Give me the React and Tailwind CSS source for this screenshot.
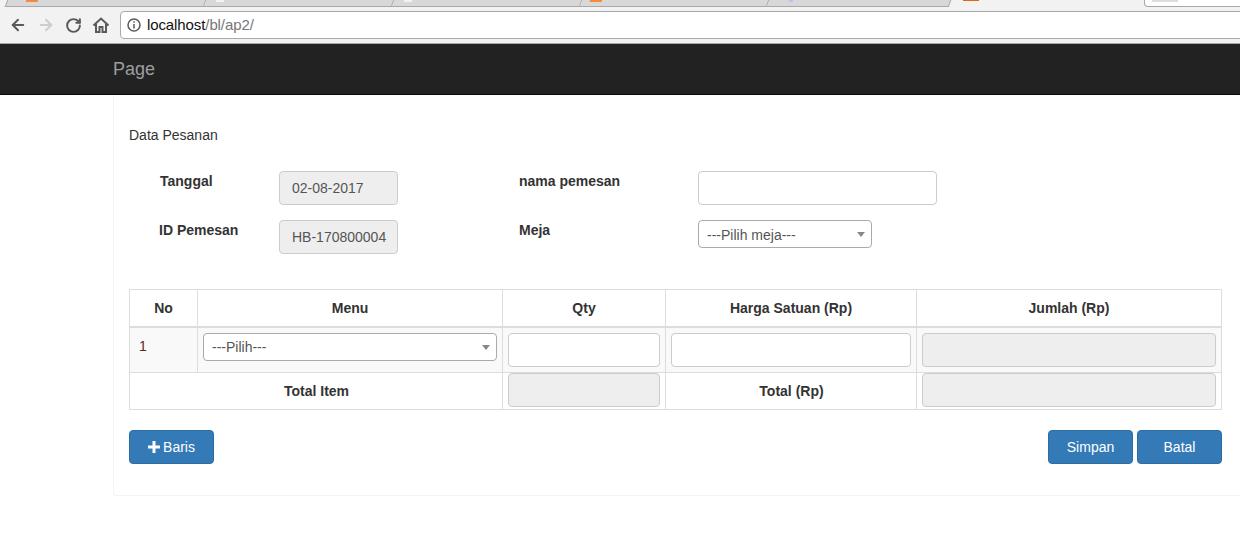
import { ArrowLeft, ArrowRight, RotateCw } from "lucide-react";

function Field({ value, className = "" }) {
  return (
    <div className={`h-[34px] rounded border border-[#ccc] bg-[#eee] px-3 text-sm leading-[32px] whitespace-nowrap text-[#555] ${className}`}>
      {value}
    </div>
  );
}

function Blank({ className = "" }) {
  return <div className={`h-[34px] rounded border border-[#ccc] bg-white ${className}`}></div>;
}

function Pick({ label, className = "" }) {
  return (
    <div className={`flex h-[28px] items-center justify-between rounded border border-[#aaa] bg-white pr-[6px] pl-2 text-sm text-[#555] ${className}`}>
      <span className="pt-px">{label}</span>
      <span className="mt-px h-0 w-0 border-x-4 border-t-5 border-x-transparent border-t-[#888]"></span>
    </div>
  );
}

function Tab({ className = "", icon = "", iconAt = "ml-[18px]" }) {
  return (
    <div className={`h-[7px] -skew-x-[20deg] border-r border-b border-[#a8a8a8] bg-[#d8d8d8] ${className}`}>
      {icon && <div className={`h-[2px] ${iconAt} ${icon}`}></div>}
    </div>
  );
}

function Row({ label, children, label2, children2 }) {
  return (
    <div className="flex items-start">
      <div className="w-[120px] leading-5 font-bold">{label}</div>
      <div className="w-[119px]">{children}</div>
      <div className="ml-[121px] w-[179px] leading-5 font-bold">{label2}</div>
      {children2}
    </div>
  );
}

export default function App() {
  return (
    <div className="h-[534px] w-[1240px] overflow-hidden bg-white font-['Liberation_Sans',Arial,sans-serif] text-sm text-[#333]">
      <div className="flex h-[7px] bg-[#f2f2f2] pl-[6px]">
        <Tab className="w-[199px] border-l" icon="w-3 bg-[#f58a3a]" />
        <Tab className="w-[188px]" icon="w-2 bg-[#f4f4f4]" iconAt="ml-[10px]" />
        <Tab className="w-[188px]" icon="w-2 bg-[#f4f4f4]" iconAt="ml-[10px]" />
        <Tab className="w-[187px]" icon="w-3 bg-[#f58a3a]" iconAt="ml-[8px]" />
        <Tab className="w-[182px]" icon="w-1 bg-[#b9c4e8]" iconAt="ml-[20px]" />
        <div className="w-[194px] pl-[13px]">
          <div className="h-px w-4 bg-[#e0661c]"></div>
        </div>
        <div className="flex-1 rounded-bl border-b border-l border-[#a8a8a8] bg-white pl-[7px]">
          <div className="h-[2px] w-[26px] bg-[#ddd]"></div>
        </div>
      </div>

      <div className="flex h-[36px] items-center bg-[#f2f2f2] pl-[9px]">
        <ArrowLeft size={18} strokeWidth={2.6} className="text-[#5a5a5a]" />
        <ArrowRight size={18} strokeWidth={2.6} className="ml-[10px] text-[#cdcdcd]" />
        <RotateCw size={17} strokeWidth={2.8} className="ml-[10px] text-[#5a5a5a]" />
        <svg viewBox="0 0 18 18" className="ml-[10px] h-[18px] w-[18px]" fill="none" stroke="#5a5a5a" strokeWidth="2">
          <path d="M1.5 9.5 9 2.5l7.5 7M4 8v8h3.5v-5h3v5H14V8" />
        </svg>
        <div className="-mr-1 ml-[10px] flex h-[28px] flex-1 items-center rounded-sm border border-[#a9a9a9] bg-white pl-[6px] text-[15px] tracking-[-0.1px]">
          <svg viewBox="0 0 14 14" className="h-[14px] w-[14px]" fill="none" stroke="#5a5a5a" strokeWidth="1.5">
            <circle cx="7" cy="7" r="6" />
            <path d="M7 6v4.5M7 3.2v1.6" />
          </svg>
          <span className="ml-[6px] text-[#111]">localhost</span>
          <span className="text-[#777]">/bl/ap2/</span>
        </div>
      </div>

      <div className="flex h-[52px] items-center border-t border-b border-t-[#a8a8a8] border-b-[#080808] bg-[#222] pl-[113px] text-lg text-[#9d9d9d]">
        Page
      </div>

      <div className="ml-[113px] h-[401px] rounded-bl border-b border-l border-[#f3f3f3] pt-[30px] pr-[18px] pl-[15px]">
        <p className="leading-5">Data Pesanan</p>

        <div className="mt-[26px] flex flex-col gap-[15px] pl-[30px]">
          <Row label={<span className="ml-px">Tanggal</span>} label2="nama pemesan" children2={<Blank className="w-[239px]" />}>
            <Field value="02-08-2017" />
          </Row>
          <Row label="ID Pemesan" label2="Meja" children2={<Pick label="---Pilih meja---" className="w-[174px]" />}>
            <Field value="HB-170800004" />
          </Row>
        </div>

        <table className="mt-[35px] w-[1093px] table-fixed border-collapse border border-[#ddd]">
          <thead>
            <tr className="h-[37px] border-b-2 border-[#ddd]">
              <th className="w-[68px] border border-[#ddd] font-bold">No</th>
              <th className="w-[305px] border border-[#ddd] font-bold">Menu</th>
              <th className="w-[163px] border border-[#ddd] font-bold">Qty</th>
              <th className="w-[251px] border border-[#ddd] font-bold">Harga Satuan (Rp)</th>
              <th className="border border-[#ddd] font-bold">Jumlah (Rp)</th>
            </tr>
          </thead>
          <tbody>
            <tr className="h-[46px] bg-[#f9f9f9]">
              <td className="border border-[#ddd] px-[9px] pb-[8px] text-[#5c2a1c]">1</td>
              <td className="border border-[#ddd] px-[5px] pb-[6px]"><Pick label="---Pilih---" /></td>
              <td className="border border-[#ddd] px-[5px]"><Blank /></td>
              <td className="border border-[#ddd] px-[5px]"><Blank /></td>
              <td className="border border-[#ddd] px-[5px]"><Field value="" /></td>
            </tr>
            <tr className="h-[37px]">
              <td colSpan={2} className="border border-[#ddd] pl-px text-center font-bold">Total Item</td>
              <td className="border border-[#ddd] px-[5px] align-top"><Field value="" /></td>
              <td className="border border-[#ddd] pl-px text-center font-bold">Total (Rp)</td>
              <td className="border border-[#ddd] px-[5px] align-top"><Field value="" /></td>
            </tr>
          </tbody>
        </table>

        <div className="mt-5 flex w-[1093px] items-center gap-1">
          <button className="mr-auto flex h-[34px] w-[85px] items-center justify-center gap-[3px] rounded border border-[#2e6da4] bg-[#337ab7] text-white">
            <svg viewBox="0 0 12 12" className="h-3 w-3" fill="#fff">
              <path d="M4.5 0h3v4.5H12v3H7.5V12h-3V7.5H0v-3h4.5z" />
            </svg>
            Baris
          </button>
          <button className="h-[34px] w-[85px] rounded border border-[#2e6da4] bg-[#337ab7] text-white">Simpan</button>
          <button className="h-[34px] w-[85px] rounded border border-[#2e6da4] bg-[#337ab7] text-white">Batal</button>
        </div>
      </div>
    </div>
  );
}
